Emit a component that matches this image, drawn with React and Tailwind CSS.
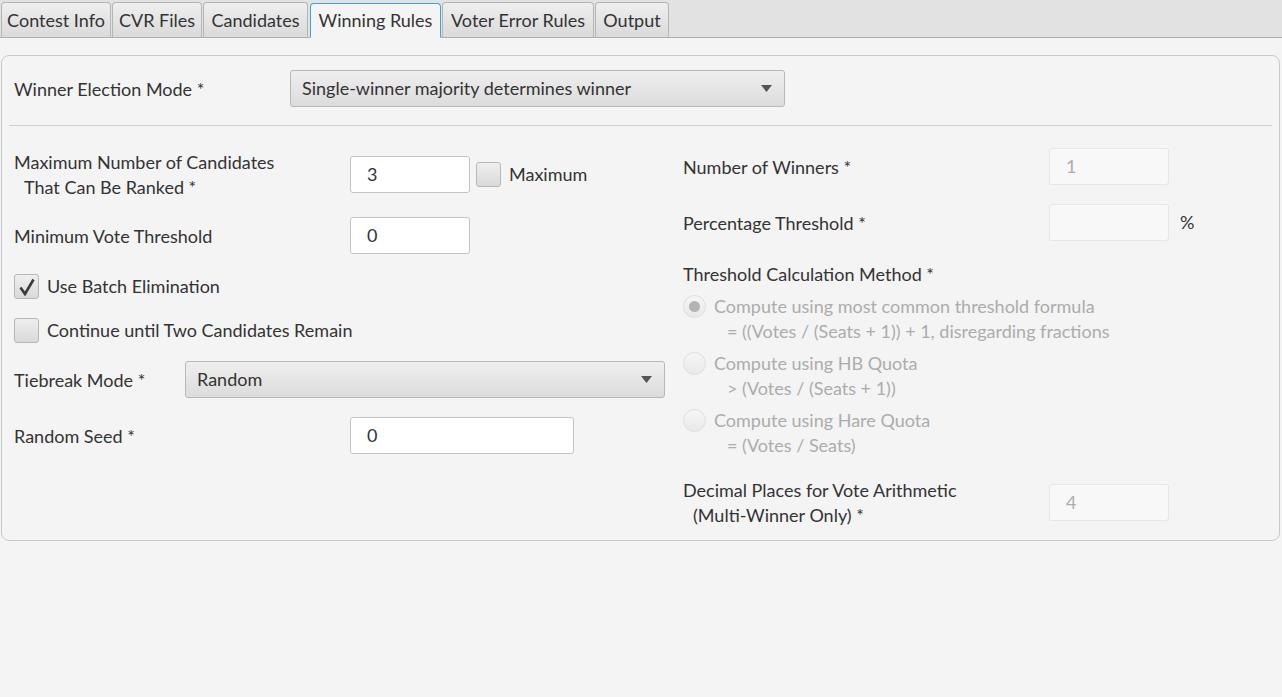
import React from 'react';

const tabs = [
  { name: 'Contest Info', w: 'w-[110px]' },
  { name: 'CVR Files', w: 'w-[90px]' },
  { name: 'Candidates', w: 'w-[105px]' },
  { name: 'Winning Rules', w: 'w-[131px]' },
  { name: 'Voter Error Rules', w: 'w-[152px]' },
  { name: 'Output', w: 'w-[74px]' },
];

const font = { fontFamily: 'Lato, "Open Sans", sans-serif' };

// Modena-like text field
const Field = ({ value, width = 'w-[120px]', disabled }) => (
  <div
    className={`flex h-[37px] ${width} items-center rounded-[3px] border px-[16px] ${
      disabled ? 'border-[#e6e6e6] bg-[#f8f8f8] text-[#adadad]' : 'border-[#c4c4c4] bg-white text-[#333]'
    }`}
  >
    {value}
  </div>
);

const Combo = ({ value, width }) => (
  <div
    className={`flex h-[37px] ${width} items-center justify-between rounded-[3px] border border-[#b8b8b8] bg-linear-to-b from-[#efefef] to-[#dcdcdc] pl-[11px] pr-[12px] text-[#333]`}
  >
    <span>{value}</span>
    <svg width="11" height="7" viewBox="0 0 11 7">
      <path d="M0 0 L11 0 L5.5 7 Z" fill="#555" />
    </svg>
  </div>
);

const Check = ({ checked, label }) => (
  <div className="flex h-[25px] items-center gap-[8px]">
    <div className="flex h-[25px] w-[25px] items-center justify-center rounded-[3px] border border-[#b8b8b8] bg-linear-to-b from-[#efefef] to-[#d9d9d9]">
      {checked && (
        <svg width="16" height="18" viewBox="0 0 16 18">
          <path d="M1.5 9.5 L6 16 L14.5 1.5" fill="none" stroke="#3a3a3a" strokeWidth="2.6" />
        </svg>
      )}
    </div>
    {label && <span className="text-[#333]">{label}</span>}
  </div>
);

const Radio = ({ selected, line1, line2 }) => (
  <div className="flex flex-col text-[#acacac]">
    <div className="flex h-[25px] items-center gap-[8px]">
      <div className="flex h-[23px] w-[23px] items-center justify-center rounded-full border border-[#dedede] bg-linear-to-b from-[#f6f6f6] to-[#e9e9e9]">
        {selected && <div className="h-[11px] w-[11px] rounded-full bg-[#b4b4b4]" />}
      </div>
      <span>{line1}</span>
    </div>
    <div className="h-[25px] pl-[44px] leading-[25px]">{line2}</div>
  </div>
);

export default function App() {
  return (
    <div className="min-h-[697px] bg-[#f4f4f4] text-[18px] leading-[25px]" style={font}>
      {/* tab header */}
      <div className="flex h-[38px] items-end gap-[1px] border-b border-[#b0b0b0] bg-[#e2e2e2] pl-[1px]">
        {tabs.map((t) => {
          const active = t.name === 'Winning Rules';
          return (
            <div
              key={t.name}
              className={`flex h-[35px] ${t.w} items-center justify-center rounded-t-[4px] border ${
                active
                  ? '-mb-px ml-[1px] border-[#3fa4d9] border-b-[#f4f4f4] bg-[#f4f4f4] text-[#333]'
                  : 'border-b-0 border-[#b5b5b5] bg-linear-to-b from-[#efefef] to-[#dadada] text-[#333]'
              }`}
            >
              {t.name}
            </div>
          );
        })}
      </div>

      {/* panel */}
      <div className="mt-[17px] ml-[1px] mr-[2px] rounded-[8px] border border-[#c8c8c8] pb-[13px]">
        <div className="flex items-center pl-[12px] pt-[14px]">
          <div className="w-[276px] pt-px text-[#333]">Winner Election Mode *</div>
          <Combo value="Single-winner majority determines winner" width="w-[495px]" />
        </div>

        <div className="mx-[7px] mt-[18px] h-px bg-[#cfcfcf]" />

        <div className="flex pt-[22px]">
          {/* left column */}
          <div className="flex w-[681px] flex-col pl-[12px] pt-[1px] text-[#333]">
            <div className="flex h-[50px] items-center">
              <div className="w-[336px] pt-px">
                <div>Maximum Number of Candidates</div>
                <div className="pl-[10px]">That Can Be Ranked *</div>
              </div>
              <Field value="3" />
              <div className="ml-[6px]">
                <Check label="Maximum" />
              </div>
            </div>
            <div className="mt-[18px] flex h-[37px] items-center">
              <div className="w-[336px] pt-px">Minimum Vote Threshold</div>
              <Field value="0" />
            </div>
            <div className="mt-[20px]">
              <Check checked label="Use Batch Elimination" />
            </div>
            <div className="mt-[19px]">
              <Check label="Continue until Two Candidates Remain" />
            </div>
            <div className="mt-[18px] flex h-[37px] items-center">
              <div className="w-[171px] pt-px">Tiebreak Mode *</div>
              <Combo value="Random" width="w-[480px]" />
            </div>
            <div className="mt-[19px] flex h-[37px] items-center">
              <div className="w-[336px] pt-px">Random Seed *</div>
              <Field value="0" width="w-[224px]" />
            </div>
          </div>

          {/* right column */}
          <div className="flex flex-col text-[#333]">
            <div className="flex h-[37px] items-center">
              <div className="w-[366px] pt-px">Number of Winners *</div>
              <Field value="1" disabled />
            </div>
            <div className="mt-[19px] flex h-[37px] items-center">
              <div className="w-[366px] pt-px">Percentage Threshold *</div>
              <Field value="" disabled />
              <span className="ml-[11px]">%</span>
            </div>
            <div className="mt-[21px] h-[25px]">Threshold Calculation Method *</div>
            <div className="mt-[7px] flex flex-col gap-[7px]">
              <Radio selected line1="Compute using most common threshold formula" line2="= ((Votes / (Seats + 1)) + 1, disregarding fractions" />
              <Radio line1="Compute using HB Quota" line2="> (Votes / (Seats + 1))" />
              <Radio line1="Compute using Hare Quota" line2="= (Votes / Seats)" />
            </div>
            <div className="mt-[19px] flex h-[50px] items-center">
              <div className="w-[366px] pt-px">
                <div>Decimal Places for Vote Arithmetic</div>
                <div className="pl-[10px]">(Multi-Winner Only) *</div>
              </div>
              <Field value="4" disabled />
            </div>
          </div>
        </div>
      </div>
    </div>
  );
}
